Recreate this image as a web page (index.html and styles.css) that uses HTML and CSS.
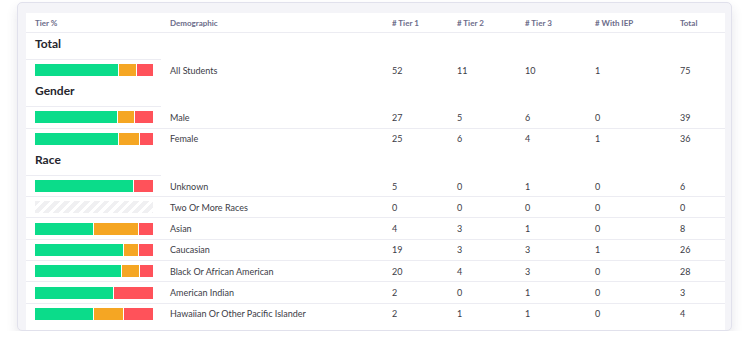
FILE: index.html
```html
<!DOCTYPE html>
<html lang="en">
<head>
  <meta charset="UTF-8">
  <title>Tier Breakdown</title>
  <link rel="stylesheet" href="styles.css">
</head>
<body>

  <div class="frame">
    <div class="card">

      <div class="row head">
        <div>Tier %</div>
        <div>Demographic</div>
        <div># Tier 1</div>
        <div># Tier 2</div>
        <div># Tier 3</div>
        <div># With IEP</div>
        <div>Total</div>
      </div>

      <div class="section">Total</div>
      <div class="row">
        <div class="bar"><span class="t1" style="flex-grow:52"></span><span class="t2" style="flex-grow:11"></span><span class="t3" style="flex-grow:10"></span></div>
        <div>All Students</div><div>52</div><div>11</div><div>10</div><div>1</div><div>75</div>
      </div>

      <div class="section">Gender</div>
      <div class="row">
        <div class="bar"><span class="t1" style="flex-grow:27"></span><span class="t2" style="flex-grow:5"></span><span class="t3" style="flex-grow:6"></span></div>
        <div>Male</div><div>27</div><div>5</div><div>6</div><div>0</div><div>39</div>
      </div>
      <div class="row">
        <div class="bar"><span class="t1" style="flex-grow:25"></span><span class="t2" style="flex-grow:6"></span><span class="t3" style="flex-grow:4"></span></div>
        <div>Female</div><div>25</div><div>6</div><div>4</div><div>1</div><div>36</div>
      </div>

      <div class="section">Race</div>
      <div class="row">
        <div class="bar"><span class="t1" style="flex-grow:5"></span><span class="t3" style="flex-grow:1"></span></div>
        <div>Unknown</div><div>5</div><div>0</div><div>1</div><div>0</div><div>6</div>
      </div>
      <div class="row">
        <div class="bar empty"></div>
        <div>Two Or More Races</div><div>0</div><div>0</div><div>0</div><div>0</div><div>0</div>
      </div>
      <div class="row">
        <div class="bar"><span class="t1" style="flex-grow:4"></span><span class="t2" style="flex-grow:3"></span><span class="t3" style="flex-grow:1"></span></div>
        <div>Asian</div><div>4</div><div>3</div><div>1</div><div>0</div><div>8</div>
      </div>
      <div class="row">
        <div class="bar"><span class="t1" style="flex-grow:19"></span><span class="t2" style="flex-grow:3"></span><span class="t3" style="flex-grow:3"></span></div>
        <div>Caucasian</div><div>19</div><div>3</div><div>3</div><div>1</div><div>26</div>
      </div>
      <div class="row">
        <div class="bar"><span class="t1" style="flex-grow:20"></span><span class="t2" style="flex-grow:4"></span><span class="t3" style="flex-grow:3"></span></div>
        <div>Black Or African American</div><div>20</div><div>4</div><div>3</div><div>0</div><div>28</div>
      </div>
      <div class="row">
        <div class="bar"><span class="t1" style="flex-grow:2"></span><span class="t3" style="flex-grow:1"></span></div>
        <div>American Indian</div><div>2</div><div>0</div><div>1</div><div>0</div><div>3</div>
      </div>
      <div class="row">
        <div class="bar"><span class="t1" style="flex-grow:2"></span><span class="t2" style="flex-grow:1"></span><span class="t3" style="flex-grow:1"></span></div>
        <div>Hawaiian Or Other Pacific Islander</div><div>2</div><div>1</div><div>1</div><div>0</div><div>4</div>
      </div>

    </div>
  </div>

</body>
</html>
```

FILE: styles.css
```css
body {
  margin: 0;
  background: #fff;
  font-family: Lato, 'Open Sans', sans-serif;
  color: #3c3c46;
}

.frame {
  width: 715px;
  height: 329px;
  box-sizing: border-box;
  margin: 2px 0 0 17px;
  padding: 10px 6px 0 8px;
  background: #f4f4f8;
  border: 1px solid #e1e1ec;
  border-radius: 5px;
  box-shadow: 0 6px 12px rgba(40, 40, 80, 0.12);
}

.card {
  background: #fff;
  height: 100%;
}

.row {
  display: grid;
  grid-template-columns: 135px 222px 65px 68px 70px 85px 54px;
  align-items: center;
  height: 20.3px;
  font-size: 9px;
}

.row > div {
  padding-left: 9px;
}

.row + .row {
  border-top: 1px solid #ececf2;
}

.row.head {
  height: 19px;
  border-bottom: 1px solid #ececf2;
  font-size: 8px;
  font-weight: 700;
  color: #6c6c8a;
}

.section {
  width: 135px;
  height: 27px;
  box-sizing: border-box;
  padding: 3px 0 0 9px;
  border-bottom: 1px solid #ececf2;
  font-size: 12px;
  font-weight: 700;
  color: #26262e;
}

.bar {
  display: flex;
  gap: 1px;
  width: 118px;
  height: 12px;
  padding: 0 !important;
  margin-left: 9px;
}

.bar span {
  flex-basis: 0;
}

.t1 { background: #0bdc8a; }
.t2 { background: #f5a623; }
.t3 { background: #ff525a; }

.bar.empty {
  background: repeating-linear-gradient(135deg, #f0f0f2 0 4px, #fff 4px 7px);
}
```
